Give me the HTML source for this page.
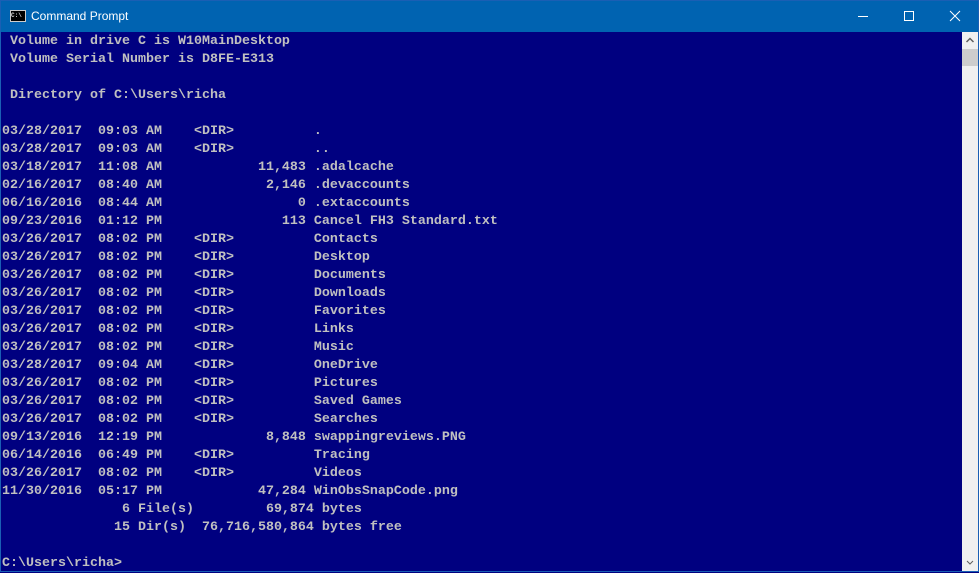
<!DOCTYPE html>
<html><head><meta charset="utf-8"><style>
html,body{margin:0;padding:0;width:979px;height:572px;overflow:hidden;background:#000080}
.win{position:absolute;left:0;top:0;width:977px;height:570px;border:1px solid #1a5fb4;background:#000080}
.title{position:absolute;left:0;top:0;width:977px;height:31px;background:#0063b1;color:#fff;font:12px "Liberation Sans",sans-serif}
.title .t{position:absolute;left:30px;top:8px}
.ico{position:absolute;left:9px;top:9px;width:14px;height:10px;background:#000;border:1px solid #ccc;font:bold 6px "Liberation Mono",monospace;color:#ddd;line-height:10px;text-align:left}
.btn{position:absolute;top:0;width:46px;height:31px}
pre{position:absolute;left:1px;top:32px;margin:0;font:bold 13.33px/18px "Liberation Mono",monospace;color:#c0c0c0}
.sb{position:absolute;left:961px;top:31px;width:16px;height:539px;background:#f0f0f0}
.thumb{position:absolute;left:0;top:17px;width:16px;height:17px;background:#cdcdcd}
</style></head><body><div class="win">
<div class="title"><div class="ico">C:\</div><span class="t">Command Prompt</span>
<svg class="btn" style="left:839px" viewBox="0 0 46 31"><line x1="18" y1="15.5" x2="28" y2="15.5" stroke="#fff"/></svg>
<svg class="btn" style="left:885px" viewBox="0 0 46 31"><rect x="18.5" y="10.5" width="9" height="9" fill="none" stroke="#fff"/></svg>
<svg class="btn" style="left:931px" viewBox="0 0 46 31"><path d="M18 10L28 20M28 10L18 20" stroke="#fff"/></svg>
</div>
<pre> Volume in drive C is W10MainDesktop
 Volume Serial Number is D8FE-E313

 Directory of C:\Users\richa

03/28/2017  09:03 AM    &lt;DIR&gt;          .
03/28/2017  09:03 AM    &lt;DIR&gt;          ..
03/18/2017  11:08 AM            11,483 .adalcache
02/16/2017  08:40 AM             2,146 .devaccounts
06/16/2016  08:44 AM                 0 .extaccounts
09/23/2016  01:12 PM               113 Cancel FH3 Standard.txt
03/26/2017  08:02 PM    &lt;DIR&gt;          Contacts
03/26/2017  08:02 PM    &lt;DIR&gt;          Desktop
03/26/2017  08:02 PM    &lt;DIR&gt;          Documents
03/26/2017  08:02 PM    &lt;DIR&gt;          Downloads
03/26/2017  08:02 PM    &lt;DIR&gt;          Favorites
03/26/2017  08:02 PM    &lt;DIR&gt;          Links
03/26/2017  08:02 PM    &lt;DIR&gt;          Music
03/28/2017  09:04 AM    &lt;DIR&gt;          OneDrive
03/26/2017  08:02 PM    &lt;DIR&gt;          Pictures
03/26/2017  08:02 PM    &lt;DIR&gt;          Saved Games
03/26/2017  08:02 PM    &lt;DIR&gt;          Searches
09/13/2016  12:19 PM             8,848 swappingreviews.PNG
06/14/2016  06:49 PM    &lt;DIR&gt;          Tracing
03/26/2017  08:02 PM    &lt;DIR&gt;          Videos
11/30/2016  05:17 PM            47,284 WinObsSnapCode.png
               6 File(s)         69,874 bytes
              15 Dir(s)  76,716,580,864 bytes free

C:\Users\richa&gt;</pre>
<div class="sb"><div class="thumb"></div>
<svg style="position:absolute;left:0;top:0" width="16" height="17"><path d="M4.5 10L8 6.5L11.5 10" fill="none" stroke="#606060" stroke-width="1.5"/></svg>
<svg style="position:absolute;left:0;bottom:0" width="16" height="17"><path d="M5 7L8 10L11 7" fill="none" stroke="#606060" stroke-width="1"/></svg>
</div>
</div></body></html>
